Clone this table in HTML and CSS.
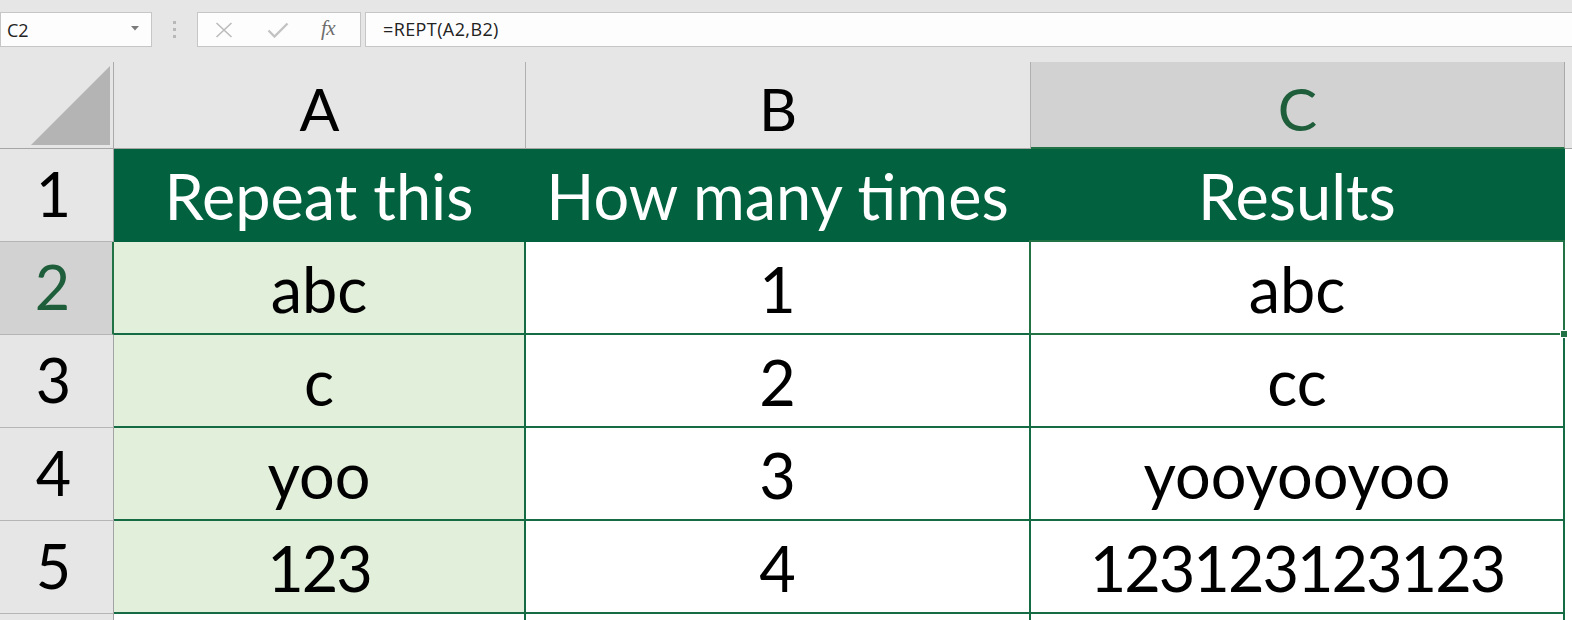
FILE: index.html
```html
<!DOCTYPE html>
<html>
<head>
<meta charset="utf-8">
<link rel="stylesheet" href="styles.css">
</head>
<body>
<div class="toolbar">
  <div class="namebox">
    <span class="ref">C2</span>
    <svg class="dd" width="8" height="5" viewBox="0 0 8 5"><path d="M0 0H8L4 4.5Z" fill="#7b7b7b"/></svg>
  </div>
  <div class="grip"><i></i><i></i><i></i></div>
  <div class="fxbtns">
    <svg class="ico-x" width="18" height="16" viewBox="0 0 18 16"><path d="M1.5 1L16.5 15M16.5 1L1.5 15" stroke="#bcbcbc" stroke-width="1.6" fill="none"/></svg>
    <svg class="ico-ok" width="22" height="16" viewBox="0 0 22 16"><path d="M1.5 8.5L7.5 14.5L20.5 1.5" stroke="#c3c3c3" stroke-width="2.4" fill="none"/></svg>
    <span class="fx">fx</span>
  </div>
  <div class="formula">=REPT(A2,B2)</div>
</div>
<div class="sheet">
  <div class="corner"><svg width="113" height="86" viewBox="0 0 113 86"><polygon points="31,83 110,4 110,83" fill="#b4b4b4"/></svg></div>
  <div class="colh">A</div>
  <div class="colh">B</div>
  <div class="colh sel">C</div>
  <div class="colh rest"></div>

  <div class="rowh">1</div>
  <div class="cell head">Repeat this</div>
  <div class="cell head">How many times</div>
  <div class="cell head">Results</div>
  <div class="cell rest"></div>

  <div class="rowh sel">2</div>
  <div class="cell a">abc</div>
  <div class="cell">1</div>
  <div class="cell active">abc<span class="selbox"></span><span class="handle"></span></div>
  <div class="cell rest"></div>

  <div class="rowh">3</div>
  <div class="cell a">c</div>
  <div class="cell">2</div>
  <div class="cell">cc</div>
  <div class="cell rest"></div>

  <div class="rowh">4</div>
  <div class="cell a">yoo</div>
  <div class="cell">3</div>
  <div class="cell">yooyooyoo</div>
  <div class="cell rest"></div>

  <div class="rowh">5</div>
  <div class="cell a num">123</div>
  <div class="cell">4</div>
  <div class="cell num">123123123123</div>
  <div class="cell rest"></div>

  <div class="rowh"></div>
  <div class="cell empty"></div>
  <div class="cell empty"></div>
  <div class="cell empty"></div>
  <div class="cell rest"></div>
</div>
</body>
</html>
```
FILE: styles.css
```css
* { box-sizing: border-box; }
html, body { margin: 0; padding: 0; }
body {
  width: 1572px;
  height: 620px;
  overflow: hidden;
  background: #e6e6e6;
  font-family: "Open Sans", "Liberation Sans", sans-serif;
}

.toolbar {
  height: 62px;
  padding-top: 12px;
  display: flex;
  align-items: flex-start;
}
.namebox {
  width: 152px;
  height: 35px;
  background: #fdfdfd;
  border: 1px solid #c6c6c6;
  display: flex;
  align-items: center;
  justify-content: space-between;
  padding: 0 12px 0 6px;
}
.ref {
  font-size: 18px;
  color: #222;
  line-height: 1;
  margin-top: 1px;
}
.dd { margin-top: -2px; }
.grip {
  width: 45px;
  height: 35px;
  display: flex;
  flex-direction: column;
  align-items: center;
  justify-content: center;
  gap: 4px;
}
.grip i {
  display: block;
  width: 3px;
  height: 3px;
  background: #b8b8b8;
}
.fxbtns {
  width: 164px;
  height: 35px;
  background: #fdfdfd;
  border: 1px solid #c6c6c6;
  display: flex;
  align-items: center;
  padding-left: 17px;
}
.ico-x { margin-right: 34px; }
.ico-ok { margin-right: 32px; }
.fx {
  font-family: "Liberation Serif", "DejaVu Serif", serif;
  font-style: italic;
  font-size: 21px;
  color: #6e6e6e;
  letter-spacing: -0.5px;
  margin-top: -3px;
}
.formula {
  flex: 1;
  height: 35px;
  margin-left: 4px;
  margin-right: -2px;
  background: #fdfdfd;
  border: 1px solid #c6c6c6;
  font-size: 18px;
  color: #222;
  line-height: 33px;
  padding-left: 17px;
  letter-spacing: 0.4px;
}

.sheet {
  display: grid;
  grid-template-columns: 114px 412px 505px 534px 1fr;
  grid-template-rows: 87px repeat(5, 93px) 20px;
  background: #fff;
  font-family: Lato, "Open Sans", sans-serif;
  font-size: 63px;
  color: #000;
}

.corner {
  background: #e6e6e6;
  border-right: 1px solid #ababab;
  border-bottom: 1px solid #a6a6a6;
}
.corner svg { display: block; }

.colh {
  background: #e6e6e6;
  border-right: 1px solid #b0b0b0;
  border-bottom: 1px solid #a6a6a6;
  display: flex;
  align-items: flex-end;
  justify-content: center;
  line-height: 1;
  padding-bottom: 10px;
  font-size: 59px;
}
.colh.sel {
  background: #d2d2d2;
  color: #1e5e3b;
  border-right-color: #a9a9a9;
  border-bottom: 2px solid #217346;
  padding-bottom: 9px;
}
.colh.rest { border-right: none; }

.rowh {
  background: #e6e6e6;
  border-right: 1px solid #a4a4a4;
  border-bottom: 1px solid #b5b5b5;
  display: flex;
  align-items: flex-end;
  justify-content: center;
  line-height: 1;
  padding-bottom: 17px;
  padding-right: 6px;
  font-size: 61px;
}
.rowh.sel {
  background: #d2d2d2;
  color: #1e5e3b;
  border-right: 2px solid #217346;
  padding-right: 7px;
}

.cell {
  border-right: 2px solid #156b43;
  border-bottom: 2px solid #156b43;
  display: flex;
  align-items: flex-end;
  justify-content: center;
  line-height: 1;
  padding-bottom: 13px;
  white-space: nowrap;
  position: relative;
}
.cell.head {
  background: #02613f;
  color: #fff;
  border-color: #02613f;
}
.cell.a { background: #e2efda; }
.cell.num { letter-spacing: -2px; }
.cell.rest {
  border: none;
  background: #fff;
}
.cell.empty {
  border-bottom: none;
}

.selbox {
  position: absolute;
  left: -2px;
  top: -2px;
  right: -2px;
  bottom: -2px;
  border: 2px solid #217346;
  z-index: 2;
}
.handle {
  position: absolute;
  right: -5px;
  bottom: -5px;
  width: 8px;
  height: 8px;
  background: #217346;
  border: 1px solid #fff;
  z-index: 3;
}
```
